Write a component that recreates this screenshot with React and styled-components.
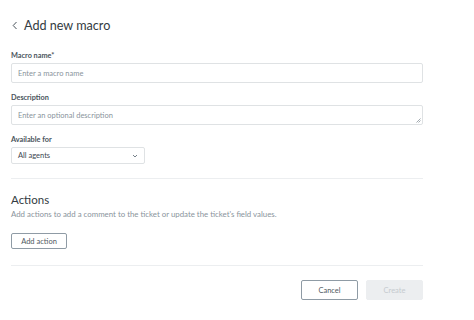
import React from "react";
import styled, { createGlobalStyle } from "styled-components";

const Global = createGlobalStyle`
  body {
    margin: 0;
    background: #ffffff;
    font-family: Lato, "Open Sans", sans-serif;
  }
`;

const Page = styled.div`
  width: 474px;
  height: 320px;
  box-sizing: border-box;
  padding: 14px 51px 0 11px;
  color: #2f3941;
`;

const Title = styled.h1`
  display: flex;
  align-items: center;
  gap: 6px;
  margin: 0 0 15px;
  padding-left: 1px;
  font-size: 12.6px;
  font-weight: 400;
  height: 22px;
  color: #333b42;
`;

const Field = styled.div`
  display: flex;
  flex-direction: column;
  margin-bottom: 10px;
`;

const Label = styled.label`
  font-size: 7.3px;
  font-weight: 700;
  color: #49535b;
  margin-bottom: 2px;
  line-height: 10px;
`;

const Input = styled.div`
  box-sizing: border-box;
  width: ${(p) => p.$width || "100%"};
  height: ${(p) => p.$height || "20px"};
  border: 1px solid #dfe2e4;
  border-radius: 2px;
  padding: 0 6px;
  display: flex;
  align-items: center;
  justify-content: space-between;
  font-size: 7.5px;
  color: ${(p) => (p.$filled ? "#3d474f" : "#8a949c")};
  position: relative;
`;

const Grip = styled.svg`
  position: absolute;
  right: 1px;
  bottom: 1px;
`;

const Divider = styled.hr`
  border: none;
  border-top: 1px solid #eceef0;
  margin: ${(p) => p.$margin};
`;

const SectionTitle = styled.h2`
  margin: 0;
  font-size: 11.5px;
  font-weight: 400;
  color: #333b42;
  line-height: 14px;
`;

const Hint = styled.p`
  margin: 2px 0 14px;
  font-size: 7.85px;
  line-height: 10px;
  color: #8a949c;
`;

const Button = styled.button`
  display: block;
  box-sizing: border-box;
  width: ${(p) => p.$width};
  height: ${(p) => p.$height};
  border-radius: 2px;
  font-family: inherit;
  font-size: 7.5px;
  padding: 0;
  border: 1px solid ${(p) => (p.$disabled ? "#eceef0" : "#8f9ba5")};
  background: ${(p) => (p.$disabled ? "#eceef0" : "#ffffff")};
  color: ${(p) => (p.$disabled ? "#c5cacf" : "#505a62")};
`;

const Footer = styled.div`
  display: flex;
  justify-content: flex-end;
  gap: 8px;
`;

export default function App() {
  return (
    <>
      <Global />
      <Page>
        <Title>
          <svg width="6" height="9" viewBox="0 0 6 9">
            <path d="M4.5 1 L1.2 4.5 L4.5 8" stroke="#4a545c" strokeWidth="1" fill="none" />
          </svg>
          Add new macro
        </Title>
        <Field>
          <Label>Macro name*</Label>
          <Input>Enter a macro name</Input>
        </Field>
        <Field>
          <Label>Description</Label>
          <Input>
            Enter an optional description
            <Grip width="5" height="5" viewBox="0 0 5 5">
              <path d="M0.5 4.5 L4.5 0.5 M2.5 4.5 L4.5 2.5" stroke="#8a949c" strokeWidth="0.8" />
            </Grip>
          </Input>
        </Field>
        <Field>
          <Label>Available for</Label>
          <Input $width="134px" $height="17px" $filled>
            All agents
            <svg width="6" height="4" viewBox="0 0 6 4">
              <path d="M1 1 L3 3 L5 1" stroke="#68737d" strokeWidth="0.9" fill="none" />
            </svg>
          </Input>
        </Field>
        <Divider $margin="14px 0 14px" />
        <SectionTitle>Actions</SectionTitle>
        <Hint>Add actions to add a comment to the ticket or update the ticket's field values.</Hint>
        <Button $width="56px" $height="16px">Add action</Button>
        <Divider $margin="16px 0 14px" />
        <Footer>
          <Button $width="57px" $height="20px">Cancel</Button>
          <Button $width="57px" $height="20px" $disabled>Create</Button>
        </Footer>
      </Page>
    </>
  );
}
